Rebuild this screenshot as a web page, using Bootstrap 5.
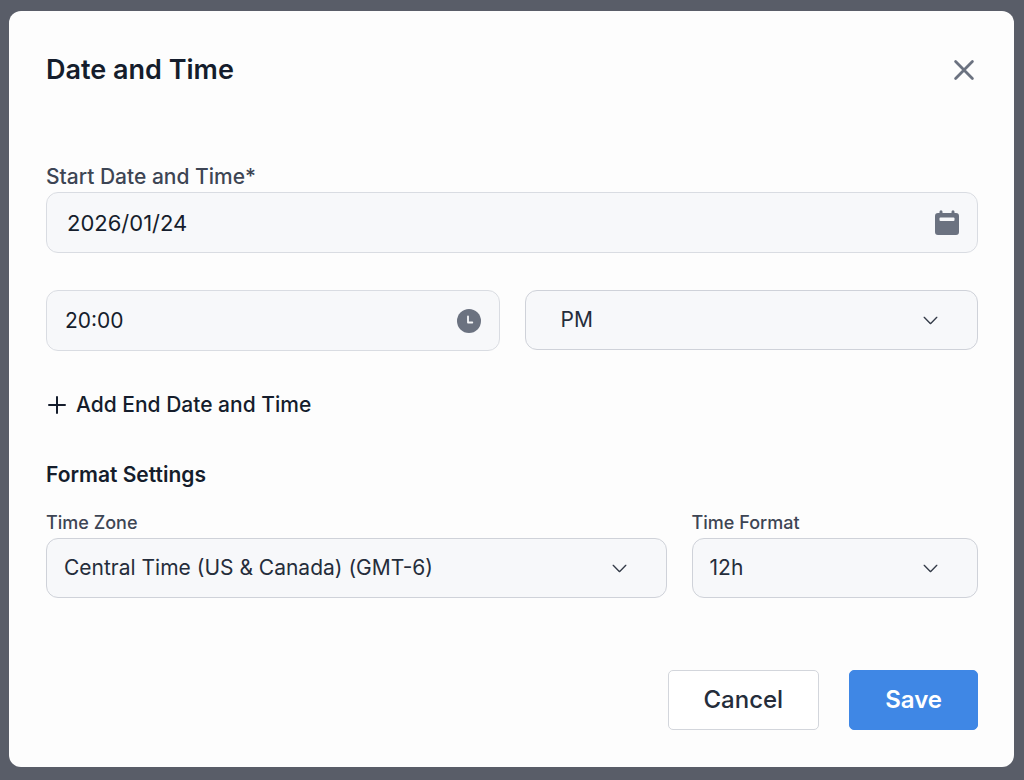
<!DOCTYPE html>
<html lang="en">
<head>
<meta charset="utf-8">
<meta name="viewport" content="width=device-width, initial-scale=1">
<title>Date and Time</title>
<link href="https://cdn.jsdelivr.net/npm/bootstrap@5.3.0/dist/css/bootstrap.min.css" rel="stylesheet">
<style>
  body { font-family: Inter, "Liberation Sans", sans-serif; background: #595d68; color: #151d2c; }
  .page { padding: 11px 10px 13px 9px; }
  .dialog { background: #fdfdfd; border-radius: 12px; padding: 36px 36px 37px 37px; }
  .dialog-title { font-size: 27px; line-height: 45px; font-weight: 600; }
  .section-title { font-size: 21px; line-height: 28px; font-weight: 600; margin-top: 41px; }
  .close-btn { color: #6b7280; line-height: 0; padding: 8px 3px; }
  .field-label { font-size: 21px; line-height: 30px; color: #3d4554; margin-top: 70px; font-weight: 500; }
  .small-label { font-size: 18px; line-height: 30px; color: #3d4554; font-weight: 500; }
  .form-control.field, .form-select.field {
    height: 61px; font-size: 21px; line-height: 28px; padding: 0 18px;
    background-color: #f7f8fa; border: 1px solid #d9dce2; border-radius: 12px; color: #151d2c;
  }
  .form-control.date-field { font-size: 22px; padding-left: 20px; }
  .form-select.field {
    height: 60px; padding: 0 80px 0 17px; color: #252d3b; border-color: #cfd2d9;
    background-image: url("data:image/svg+xml,%3Csvg xmlns='http://www.w3.org/2000/svg' viewBox='0 0 16 10'%3E%3Cpath d='M1 1.500l7 7 7-7' fill='none' stroke='%23353c49' stroke-width='1.500' stroke-linecap='round' stroke-linejoin='round'/%3E%3C/svg%3E");
    background-size: 15px 9px; background-position: right 39px center;
  }
  .form-select.period { padding-left: 35px; }
  .icon-end { position: absolute; right: 19px; top: 50%; transform: translateY(-50%); color: #6b7280; pointer-events: none; }
  .pair { gap: 25px; }
  .time-row { grid-template-columns: 1fr 1fr; margin-top: 37px; align-items: start; }
  .format-row { grid-template-columns: 13fr 6fr; margin-top: 19px; }
  .add-btn { font-size: 21px; line-height: 30px; font-weight: 500; color: #151d2c; margin-top: 39px; gap: 9px; }
  .actions { margin-top: 72px; gap: 30px; }
  .action-btn { height: 60px; font-size: 24px; line-height: 32px; font-weight: 500; padding: 0 35px; border-radius: 5px; }
  .btn-cancel { background: #fff; border: 1px solid #d3d6dc; color: #252d3b; }
  .btn-save { background: #3f87e5; border: 1px solid #3f87e5; color: #fff; font-weight: 600; }
</style>
</head>
<body>
<div class="page">
  <form class="dialog" role="dialog" aria-labelledby="dialogTitle">
    <div class="d-flex justify-content-between align-items-center">
      <h1 class="dialog-title mb-0" id="dialogTitle">Date and Time</h1>
      <button type="button" class="btn border-0 close-btn" aria-label="Close">
        <svg width="22" height="22" viewBox="0 0 22 22" fill="none" stroke="currentColor" stroke-width="2.800" stroke-linecap="round"><path d="M2.600 2.600l16.800 16.800M19.400 2.600L2.600 19.400"/></svg>
      </button>
    </div>

    <label class="field-label d-block mb-0" for="startDate">Start Date and Time*</label>
    <div class="position-relative">
      <input type="text" class="form-control field date-field" id="startDate" value="2026/01/24">
      <svg class="icon-end" width="24" height="26" viewBox="0 0 24 26"><path fill="currentColor" d="M3 3H4.500V1.800a1.500 1.500 0 0 1 3 0V3h9V1.800a1.500 1.500 0 0 1 3 0V3H21a3 3 0 0 1 3 3v16a3 3 0 0 1-3 3H3a3 3 0 0 1-3-3V6a3 3 0 0 1 3-3z"/><rect x="4.500" y="7.500" width="15" height="3.500" rx="1" fill="#f7f8fa"/></svg>
    </div>

    <div class="d-grid pair time-row">
      <div class="position-relative">
        <input type="text" class="form-control field" aria-label="Start time" value="20:00">
        <svg class="icon-end" width="24" height="24" viewBox="0 0 24 24"><circle cx="12" cy="12" r="12" fill="currentColor"/><path d="M11 7.500v6h4.300" fill="none" stroke="#f7f8fa" stroke-width="1.800" stroke-linecap="round" stroke-linejoin="round"/></svg>
      </div>
      <select class="form-select field period" aria-label="AM or PM"><option>AM</option><option selected>PM</option></select>
    </div>

    <button type="button" class="btn border-0 p-0 d-flex align-items-center add-btn">
      <svg width="21" height="20" viewBox="0 0 21 20" fill="none" stroke="currentColor" stroke-width="2" stroke-linecap="round"><path d="M11 2v16M3 10h16"/></svg>
      Add End Date and Time
    </button>

    <h2 class="section-title mb-0">Format Settings</h2>
    <div class="d-grid pair format-row">
      <div>
        <label class="small-label d-block" for="timeZone">Time Zone</label>
        <select class="form-select field" id="timeZone"><option>Central Time (US &amp; Canada) (GMT-6)</option></select>
      </div>
      <div>
        <label class="small-label d-block" for="timeFormat">Time Format</label>
        <select class="form-select field" id="timeFormat"><option>12h</option><option>24h</option></select>
      </div>
    </div>

    <div class="d-flex justify-content-end actions">
      <button type="button" class="btn action-btn btn-cancel">Cancel</button>
      <button type="submit" class="btn action-btn btn-save">Save</button>
    </div>
  </form>
</div>
<script src="https://cdn.jsdelivr.net/npm/bootstrap@5.3.0/dist/js/bootstrap.bundle.min.js"></script>
</body>
</html>
